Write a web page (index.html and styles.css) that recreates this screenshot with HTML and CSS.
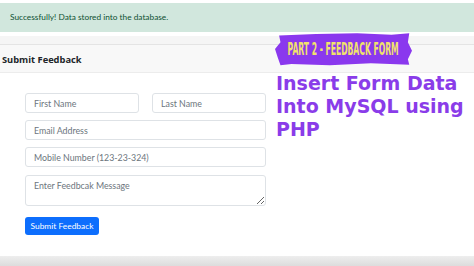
FILE: index.html
```html
<!DOCTYPE html>
<html lang="en">
<head>
    <meta charset="UTF-8">
    <meta name="viewport" content="width=device-width, initial-scale=1.0">
    <title>Submit Feedback</title>
    <link rel="stylesheet" href="styles.css">
</head>
<body>

<div class="page">
    <!-- Success message -->
    <div class="alert">Successfully! Data stored into the database.</div>

    <!-- Feedback card -->
    <div class="card">
        <div class="card-top"></div>
        <div class="card-header">Submit Feedback</div>
        <div class="card-body">
            <form>
                <div class="row">
                    <input type="text" name="first_name" placeholder="First Name">
                    <input type="text" name="last_name" placeholder="Last Name">
                </div>
                <input type="email" name="email" placeholder="Email Address">
                <input type="text" name="mobile" placeholder="Mobile Number (123-23-324)">
                <textarea name="message" placeholder="Enter Feedbcak Message"></textarea>
                <div>
                    <button type="submit">Submit Feedback</button>
                </div>
            </form>
        </div>
    </div>

    <div class="footer-bar"></div>

    <!-- Thumbnail caption -->
    <div class="promo">
        <div class="brush"><span>PART 2 - FEEDBACK FORM</span></div>
        <h1>Insert Form Data Into MySQL using PHP</h1>
    </div>
</div>

</body>
</html>
```

FILE: styles.css
```css
body {
    margin: 0;
    font-family: Lato, "Open Sans", Arial, sans-serif;
    background-color: #fff;
}
.page {
    position: relative;
    width: 474px;
    height: 266px;
    overflow: hidden;
}
.alert {
    margin-top: 3px;
    height: 29px;
    line-height: 29px;
    padding-left: 10px;
    background-color: #d1e7dd;
    color: #0f5132;
    font-size: 8.3px;
}
.card {
    margin-top: 4px;
}
.card-top {
    height: 8px;
    background-color: #f5f5f5;
}
.card-header {
    height: 27px;
    line-height: 30px;
    padding-left: 2px;
    background-color: #f8f8f8;
    border-top: 1px solid #e4e4e4;
    border-bottom: 1px solid #ececec;
    font-family: "Open Sans", sans-serif;
    font-size: 9.3px;
    font-weight: bold;
    color: #212529;
}
.card-body {
    padding: 20px 0 0 25px;
    height: 163px;
}
form {
    width: 241px;
    display: flex;
    flex-direction: column;
    gap: 7px;
}
.row {
    display: flex;
    gap: 13px;
}
input, textarea {
    box-sizing: border-box;
    width: 100%;
    height: 20px;
    margin: 0;
    padding: 0 8px;
    border: 1px solid #dee2e6;
    border-radius: 3px;
    font-family: inherit;
    font-size: 8.8px;
    color: #212529;
}
textarea {
    height: 31px;
    padding-top: 4px;
    margin-top: 1px;
    resize: vertical;
}
::placeholder {
    color: #6c757d;
}
button {
    margin-top: 1px;
    height: 18px;
    width: 74px;
    padding: 0;
    background-color: #0d6efd;
    color: #fff;
    border: none;
    border-radius: 3px;
    font-family: inherit;
    font-size: 8.4px;
    white-space: nowrap;
}
.footer-bar {
    height: 10px;
    background: linear-gradient(#eeeeee, #dcdcdc);
}
.promo {
    position: absolute;
    top: 32px;
    left: 275px;
}
.brush {
    display: flex;
    justify-content: center;
    width: 137px;
    height: 34px;
    background-color: #8a38ee;
    clip-path: polygon(3% 10%, 30% 6%, 60% 4%, 85% 8%, 98% 4%, 97% 30%, 100% 55%, 97% 80%, 98% 96%, 70% 92%, 40% 98%, 12% 94%, 4% 98%, 2% 75%, 0% 50%, 4% 30%);
}
.brush span {
    flex-shrink: 0;
    margin-top: 7px;
    font-family: "DejaVu Sans Condensed", "DejaVu Sans", sans-serif;
    font-weight: bold;
    font-size: 17px;
    line-height: 20px;
    color: #f1e36b;
    transform: scaleX(0.5);
    white-space: nowrap;
}
.promo h1 {
    margin: 6px 0 0 1px;
    width: 200px;
    font-family: "DejaVu Sans", sans-serif;
    font-weight: bold;
    font-size: 19px;
    line-height: 23px;
    color: #8a3ce9;
}
```
